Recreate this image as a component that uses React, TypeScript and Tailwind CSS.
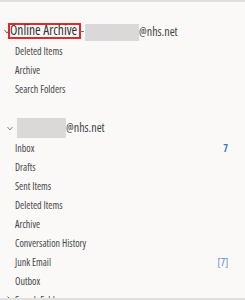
import React from "react";

const font = "font-['Open_Sans',sans-serif] [font-stretch:85%]";

function Row({ label, count, countBold }: { label: string; count?: string; countBold?: boolean }) {
  return (
    <div className="flex h-[19px] items-center pl-[15px] pr-[17px]">
      <span className="flex-1 text-[10px] leading-none text-[#474747]">{label}</span>
      {count && (
        <span className={`text-[10px] leading-none ${countBold ? "font-bold text-[#3c7bc6]" : "text-[#4f87c9]"}`}>
          {count}
        </span>
      )}
    </div>
  );
}

function ChevronDown({ className }: { className?: string }) {
  return (
    <svg width="6" height="5" viewBox="0 0 6 5" className={className} fill="none">
      <path d="M0.5 1 L3 4 L5.5 1" stroke="currentColor" strokeWidth="0.9" />
    </svg>
  );
}

export default function App() {
  return (
    <div className={`relative h-[300px] w-[245px] overflow-hidden border-t-2 border-b-2 border-[#e2e0de] bg-[#faf9f8] ${font}`}>
      <div className="h-[21px]" />
      {/* Online Archive header */}
      <div className="relative flex h-[18px] items-start">
        <ChevronDown className="absolute left-[4px] top-[6px] text-[#555]" />
        <div className="ml-[8px] flex h-[16px] w-[73px] items-center border-2 border-[#e6262b]">
          <span className="whitespace-nowrap text-[13.5px] leading-none text-[#333]">Online Archive</span>
        </div>
        <span className="mt-[8px] h-[1px] w-[3px] bg-[#777]" />
        <div className="ml-[1px] mt-[1px] h-[17px] w-[54px] bg-[#d9d9d9]" />
        <span className="mt-[3px] whitespace-nowrap text-[12px] leading-none text-[#444]">@nhs.net</span>
      </div>
      <Row label="Deleted Items" />
      <Row label="Archive" />
      <Row label="Search Folders" />
      <div className="h-[20px]" />
      {/* second account header */}
      <div className="relative flex h-[20px] items-center">
        <ChevronDown className="absolute left-[7px] top-[8px] text-[#777]" />
        <div className="ml-[17px] h-[20px] w-[49px] bg-[#d9d9d9]" />
        <span className="whitespace-nowrap text-[12px] leading-none text-[#444]">@nhs.net</span>
      </div>
      <Row label="Inbox" count="7" countBold />
      <Row label="Drafts" />
      <Row label="Sent Items" />
      <Row label="Deleted Items" />
      <Row label="Archive" />
      <Row label="Conversation History" />
      <Row label="Junk Email" count="[7]" />
      <Row label="Outbox" />
      <div className="relative flex h-[19px] items-center pl-[15px]">
        <svg width="4" height="6" viewBox="0 0 4 6" className="absolute left-[7px] top-[6px] text-[#555]" fill="none">
          <path d="M0.5 0.5 L3 3 L0.5 5.5" stroke="currentColor" strokeWidth="0.9" />
        </svg>
        <span className="text-[10px] leading-none text-[#474747]">Search Folders</span>
      </div>
    </div>
  );
}
